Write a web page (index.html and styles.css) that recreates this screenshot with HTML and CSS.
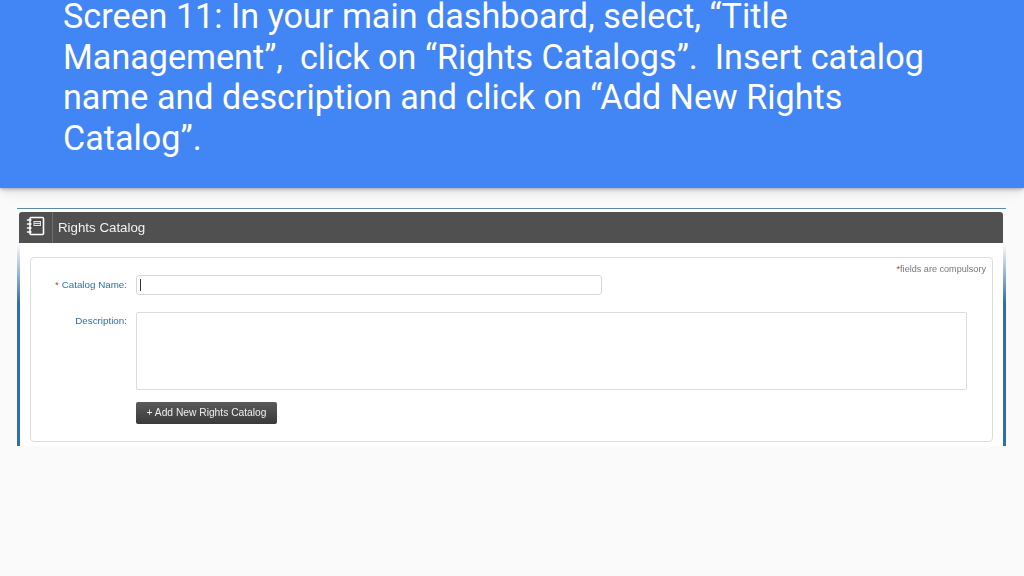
FILE: index.html
```html
<!DOCTYPE html>
<html lang="en">
<head>
<meta charset="utf-8">
<title>Rights Catalog</title>
<link rel="stylesheet" href="styles.css">
</head>
<body>
<header class="slide-head">
  <h1 class="slide-title">Screen 11: In your main dashboard, select, “Title Management”,&nbsp; click on “Rights Catalogs”.&nbsp; Insert catalog name and description and click on “Add New Rights Catalog”.</h1>
</header>
<section class="panel">
  <div class="panel-inner">
    <div class="panel-bar">
      <span class="panel-icon">
        <svg width="20" height="22" viewBox="0 0 20 22">
          <path d="M5 2.5h11.5a1 1 0 0 1 1 1v15a1 1 0 0 1-1 1H5a1 1 0 0 1-1-1v-15a1 1 0 0 1 1-1z" fill="#4d4d4d" stroke="#fff" stroke-width="1.6"/>
          <rect x="7" y="5.5" width="8.5" height="6" fill="#e6e6e6" stroke="#2f2f2f" stroke-width="0.8"/>
          <rect x="8.3" y="7.1" width="5.8" height="1" fill="#555"/>
          <rect x="8.3" y="9" width="5.8" height="1" fill="#555"/>
          <path d="M1.5 5h3.5M1.5 9h3.5M1.5 13h3.5M1.5 17h3.5" stroke="#fff" stroke-width="1.5" stroke-linecap="round"/>
        </svg>
      </span>
      <span class="panel-title">Rights Catalog</span>
    </div>
    <div class="panel-body">
      <form class="card">
        <p class="note"><span class="req">*</span>fields are compulsory</p>
        <div class="row">
          <label class="label"><span class="req">*</span> Catalog Name:</label>
          <div class="input"><span class="caret"></span></div>
        </div>
        <div class="row row-desc">
          <label class="label label-desc">Description:</label>
          <div class="textarea"></div>
        </div>
        <div class="row row-btn">
          <span class="label"></span>
          <button class="btn" type="button">+ Add New Rights Catalog</button>
        </div>
      </form>
    </div>
  </div>
</section>
</body>
</html>
```
FILE: styles.css
```css
* { box-sizing: border-box; }
html, body { margin: 0; height: 100%; }
body {
  background: #fafafa;
  font-family: "Liberation Sans", Arial, sans-serif;
  overflow: hidden;
}
.slide-head {
  height: 188px;
  background: #4285f4;
  box-shadow: 0 1px 4px rgba(0, 0, 0, 0.3), 0 3px 12px rgba(0, 0, 0, 0.12);
  display: flex;
  flex-direction: column;
  justify-content: flex-end;
  padding: 0 64px 30px 63px;
}
.slide-title {
  margin: 0;
  font: 400 34.15px/40.5px Roboto, sans-serif;
  color: #fff;
}
.panel {
  margin: 20px 18px 0 17px;
  height: 238px;
  border-top: 1px solid #5f89ab;
  padding: 0 3px;
  background: linear-gradient(#fafafa 15%, #2f6ea8 40%);
  display: flex;
  flex-direction: column;
  filter: blur(0.3px);
}
.panel-inner {
  flex: 1;
  padding-top: 3px;
  background: #fff;
  display: flex;
  flex-direction: column;
}
.panel-bar {
  height: 31px;
  flex: none;
  margin-left: -1px;
  background: #505050;
  border-radius: 3px 3px 0 0;
  display: flex;
  align-items: center;
  color: #fff;
}
.panel-icon {
  width: 34px;
  height: 31px;
  border-right: 1px solid #6e6e6e;
  display: flex;
  align-items: center;
  justify-content: center;
  padding-bottom: 3px;
}
.panel-title {
  margin-left: 5px;
  font-size: 13.3px;
  color: #f2f2f2;
}
.panel-body {
  flex: 1;
  padding: 14px 10px 4px;
  display: flex;
  flex-direction: column;
}
.card {
  flex: 1;
  border: 1px solid #dcdcdc;
  border-radius: 4px;
  padding: 6px 6px 0 0;
}
.note {
  margin: 0;
  text-align: right;
  font-size: 9.1px;
  line-height: 11px;
  color: #777;
}
.req { color: #c0392b; }
.row {
  display: flex;
  align-items: flex-start;
}
.label {
  width: 105px;
  flex: none;
  padding-top: 3px;
  padding-right: 9px;
  text-align: right;
  font-size: 9.8px;
  line-height: 14px;
  color: #2a6fb0;
}
.label-desc { padding-top: 1.5px; }
.input {
  width: 466px;
  height: 20px;
  border: 1px solid #d8d8d8;
  border-radius: 3px;
  display: flex;
  align-items: center;
  padding-left: 3px;
}
.caret {
  width: 1px;
  height: 12px;
  background: #333;
}
.row-desc { margin-top: 17px; }
.textarea {
  width: 831px;
  height: 78px;
  border: 1px solid #dcdcdc;
  border-radius: 2px;
}
.row-btn { margin-top: 12px; }
.btn {
  width: 141px;
  height: 22px;
  padding: 0;
  border: 0;
  border-radius: 2px;
  background: linear-gradient(#5a5a5a, #3a3a3a);
  color: #eee;
  font: 10.25px/22px "Liberation Sans", Arial, sans-serif;
}
```
